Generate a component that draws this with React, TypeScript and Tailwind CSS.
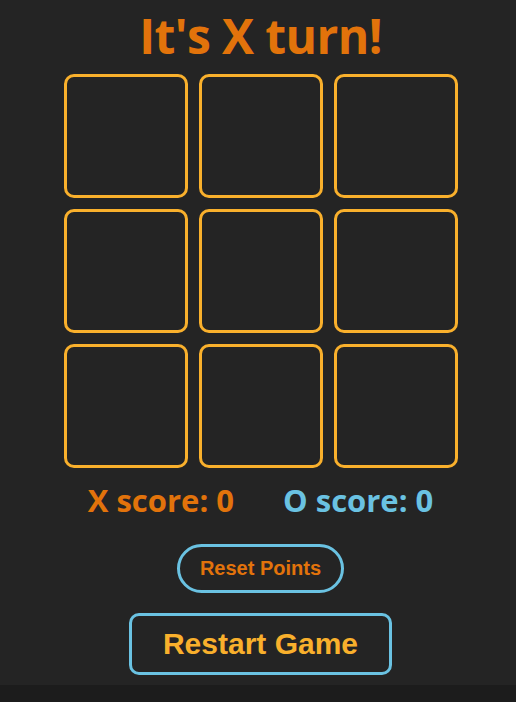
export default function App() {
  const cells = Array.from({ length: 9 }, (_, i) => i);
  return (
    <div className="min-h-screen bg-[#1c1c1c]">
      <div className="flex flex-col items-center bg-[#242424] pl-[5px] pb-[10px]">
        <h1
          className="mt-[6px] text-[48px] font-bold leading-[60px] tracking-[-0.6px] text-[#e2730b]"
          style={{ fontFamily: '"Open Sans", "Noto Sans", sans-serif' }}
        >
          It's X turn!
        </h1>
        <div className="mt-[8px] grid grid-cols-[repeat(3,124px)] gap-[11px]">
          {cells.map((c) => (
            <div
              key={c}
              className="h-[124px] w-[124px] rounded-[10px] border-[3px] border-[#f9b02c]"
            />
          ))}
        </div>
        <div
          className="mt-[12px] flex gap-[49px] text-[31px] font-bold leading-[40px]"
          style={{ fontFamily: '"Open Sans", "Noto Sans", sans-serif' }}
        >
          <span className="text-[#e2730b]">X score: 0</span>
          <span className="text-[#6ac2e2]">O score: 0</span>
        </div>
        <div
          className="flex flex-col items-center"
          style={{ fontFamily: '"Liberation Sans", Arial, sans-serif' }}
        >
          <button className="mt-[24px] rounded-full border-[3px] border-[#6ac2e2] px-[20px] py-[10px] text-[20px] font-bold leading-[23px] text-[#e2730b]">
            Reset Points
          </button>
          <button className="mt-[20px] rounded-[10px] border-[3px] border-[#6ac2e2] px-[31px] py-[11px] text-[30px] font-bold leading-[34px] text-[#f9b02c]">
            Restart Game
          </button>
        </div>
      </div>
    </div>
  );
}
